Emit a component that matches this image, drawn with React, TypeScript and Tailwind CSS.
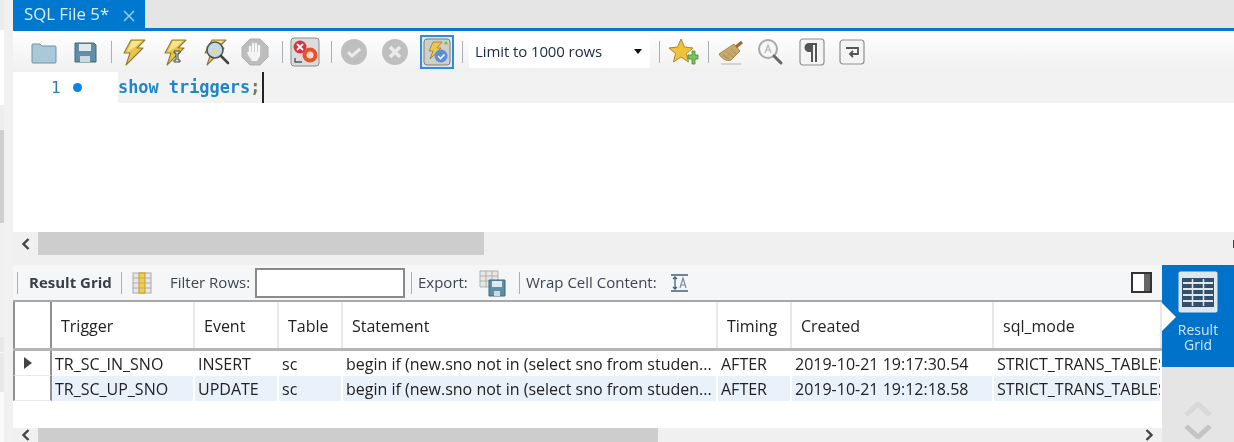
import React from 'react';

const uiFont = "font-['Open_Sans','Noto_Sans',sans-serif]";

const Sep = ({ ml, h = 'h-[22px]' }: { ml: number; h?: string }) => (
  <span className={`w-px ${h} bg-[#a9b0b5] shrink-0`} style={{ marginLeft: ml }} />
);

const Icon = ({ ml, children }: { ml: number; children: React.ReactNode }) => (
  <svg viewBox="0 0 32 32" className="w-8 h-8 shrink-0" style={{ marginLeft: ml }}>
    {children}
  </svg>
);

const Bolt = () => (
  <>
    <path d="M13 4h14l-8 8h6L8 29l4-12H6z" fill="#e8c649" stroke="#8f7a3c" strokeWidth="1.1" strokeLinejoin="round" />
    <path d="M14 5h10l-7 6-8 5z" fill="#f7e48c" />
  </>
);

const Toolbar = () => (
  <div className="h-[41px] flex items-center bg-gradient-to-b from-white to-[#f0f0f0] shrink-0">
    <Icon ml={15}>
      <path d="M4 9a1 1 0 011-1h7l2 2h13a1 1 0 011 1v15a1 1 0 01-1 1H5a1 1 0 01-1-1z" fill="#a9c8d8" stroke="#6f93a8" />
    </Icon>
    <Icon ml={9}>
      <path d="M6 7h19l2 2v17H6z" fill="#5f8fa8" stroke="#41677d" />
      <rect x="10" y="8" width="12" height="7" fill="#dfe9ee" />
      <rect x="11" y="20" width="10" height="6" fill="#cfd8dc" />
    </Icon>
    <Sep ml={10} />
    <Icon ml={6}>
      <Bolt />
    </Icon>
    <Icon ml={9}>
      <Bolt />
      <path d="M15 15h6v2h-2v7h2v2h-6v-2h2v-7h-2z" fill="#e4e4dc" stroke="#444" strokeWidth="1" />
    </Icon>
    <Icon ml={8}>
      <Bolt />
      <circle cx="16" cy="14" r="8" fill="#c4d8e8" stroke="#555" strokeWidth="1.6" />
      <path d="M13 17l3-5 3 5z" fill="#e8d98a" />
      <path d="M22 20l7 7" stroke="#444" strokeWidth="2.600" strokeLinecap="round" />
    </Icon>
    <Icon ml={8}>
      <path d="M11 3h10l8 8v10l-8 8H11l-8-8V11z" fill="#bdbdbd" stroke="#b0b0b0" />
      <path d="M11 18v-7M14 17V8M17 17V8M20 17v-7" stroke="#f4f4f4" strokeWidth="2.400" strokeLinecap="round" />
      <path d="M10 16h11v4l-3 5h-5l-4-6-1-3 2 0z" fill="#f4f4f4" />
    </Icon>
    <Sep ml={11} />
    <Icon ml={6}>
      <rect x="2" y="2" width="28" height="28" rx="3" fill="#dcdcdc" stroke="#8a8a8a" />
      <circle cx="11" cy="11" r="6.5" fill="#d8333d" />
      <path d="M8 8l6 6m0-6l-6 6" stroke="#fff" strokeWidth="1.8" />
      <circle cx="21" cy="19" r="7.5" fill="#e6532a" />
      <circle cx="21" cy="19" r="3.500" fill="#fbd9cc" />
      <path d="M6 22v4h7" stroke="#555" strokeWidth="1.4" fill="none" />
    </Icon>
    <Sep ml={10} />
    <Icon ml={6}>
      <circle cx="16" cy="16" r="13" fill="#bfbfbf" />
      <path d="M10 16l4 4 8-7" stroke="#ececec" strokeWidth="3" fill="none" />
    </Icon>
    <Icon ml={9}>
      <circle cx="16" cy="16" r="13" fill="#bfbfbf" />
      <path d="M11 11l10 10m0-10L11 21" stroke="#ececec" strokeWidth="3.2" />
    </Icon>
    <div className="ml-[9px] w-[34px] h-[34px] border-2 border-[#2b8fdc] bg-[#e6e6e6] flex items-center justify-center shrink-0">
      <svg viewBox="0 0 28 28" className="w-7 h-7">
        <rect x="1" y="1" width="26" height="26" rx="3" fill="#cfcfc9" stroke="#7d7d7d" />
        <path d="M10 4h9l-5 6h4L7 21l3-8H6z" fill="#e8c84e" stroke="#8f7a3c" strokeWidth="0.8" />
        <circle cx="23" cy="5" r="1.6" fill="#61c455" />
        <circle cx="18" cy="18" r="6.5" fill="#5b8ed8" />
        <path d="M15 18l2.500 2.500 4-4" stroke="#fff" strokeWidth="1.6" fill="none" />
      </svg>
    </div>
    <Sep ml={8} />
    <div className={`ml-[6px] w-[181px] h-8 bg-white flex items-center justify-between pl-[6px] pr-[8px] shrink-0 text-[15px] text-[#1a2a44] tracking-[-0.1px] ${uiFont}`}>
      <span>Limit to 1000 rows</span>
      <svg viewBox="0 0 8 5" className="w-2 h-[5px]">
        <path d="M0 0h8L4 5z" fill="#111" />
      </svg>
    </div>
    <Sep ml={9} />
    <Icon ml={7}>
      <path d="M14 3l3.500 8 8.500 1-6.500 5.500 2 8.500L14 21l-7.500 5 2-8.500L2 12l8.500-1z" fill="#f0c23c" stroke="#a88a2c" />
      <path d="M21 19h4v-4h3v4h3v4h-3v5h-3v-5h-4z" fill="#79c25a" stroke="#4a8a35" strokeWidth="0.8" />
    </Icon>
    <Sep ml={9} />
    <Icon ml={6}>
      <path d="M4 18l15-10 6 7-9 9c-4 2-10-2-12-6z" fill="#c9a86a" stroke="#a08a5a" />
      <path d="M8 19l6 4M12 16l6 5M16 13l5 5" stroke="#a08a5a" strokeWidth="0.8" />
      <path d="M21 11l6-5" stroke="#a0672c" strokeWidth="3" />
      <path d="M6 28h20" stroke="#c9c9c9" strokeWidth="1.500" />
    </Icon>
    <Icon ml={7}>
      <circle cx="14" cy="13" r="9" fill="#f6f6f6" stroke="#a8a8a8" strokeWidth="2" />
      <path d="M20 20l7 7" stroke="#666" strokeWidth="3" strokeLinecap="round" />
      <path d="M11 17l3-8 3 8m-5-3h4" stroke="#b4b4b4" strokeWidth="1.200" fill="none" />
    </Icon>
    <Icon ml={10}>
      <rect x="4" y="3" width="24" height="26" rx="3" fill="#f4f4f4" stroke="#909090" strokeWidth="1.2" />
      <path d="M20 7h-7a4.500 4.500 0 000 9h2v10h2V9h2v17h2V7z" fill="#555" />
    </Icon>
    <Icon ml={8}>
      <rect x="4" y="4" width="24" height="24" rx="3" fill="#f4f4f4" stroke="#909090" strokeWidth="1.2" />
      <path d="M10 12h12v6h-8m3-3l-3 3 3 3" stroke="#555" strokeWidth="1.800" fill="none" />
    </Icon>
  </div>
);

const ScrollBar = ({ thumb, right }: { thumb: string; right?: React.ReactNode }) => (
  <div className="flex items-center bg-[#f0f0f0] h-full">
    <svg viewBox="0 0 10 12" className="w-[25px] h-3 shrink-0">
      <path d="M8 1L3 6l5 5" stroke="#444" strokeWidth="2.400" fill="none" />
    </svg>
    <div className={`${thumb} h-full bg-[#cdcdcd] shrink-0`} />
    <div className="flex-1" />
    {right}
  </div>
);

const ResultToolbar = () => (
  <div className={`h-[35px] flex items-center bg-[#f5f6f8] text-[15px] text-[#3b4652] ${uiFont} shrink-0`}>
    <Sep ml={4} h="h-[22px]" />
    <span className="ml-[11px] w-[82px] font-bold text-[#3a3f45] whitespace-nowrap">Result Grid</span>
    <Sep ml={10} />
    <svg viewBox="0 0 20 22" className="ml-[10px] w-5 h-[22px] shrink-0">
      <rect x="1" y="1" width="18" height="20" fill="#e8e8e8" stroke="#aaa" />
      <rect x="7" y="1" width="6" height="20" fill="#f5d13c" stroke="#c79a1a" />
      <path d="M1 6h18M1 11h18M1 16h18" stroke="#aaa" />
    </svg>
    <span className="ml-[18px] whitespace-nowrap w-[78px]">Filter Rows:</span>
    <div className="ml-[7px] w-[150px] h-[30px] bg-white border-2 border-[#8a8a8a] shrink-0" />
    <Sep ml={6} />
    <span className="ml-[6px] whitespace-nowrap w-[50px]">Export:</span>
    <svg viewBox="0 0 28 28" className="ml-[11px] w-7 h-7 shrink-0">
      <path d="M1 2h18v16H1zM1 7h18M1 12h18M7 2v16M13 2v16" fill="#e6e6e6" stroke="#b0b0b0" />
      <path d="M10 11h16v16H10z" fill="#5f8fa8" stroke="#41677d" />
      <rect x="13" y="12" width="10" height="6" fill="#dfe9ee" />
      <rect x="15" y="22" width="6" height="5" fill="#cfd8dc" />
    </svg>
    <Sep ml={12} />
    <span className="ml-[6px] whitespace-nowrap w-[130px]">Wrap Cell Content:</span>
    <svg viewBox="0 0 18 18" className="ml-[15px] w-[18px] h-[18px] shrink-0">
      <path d="M0 1h17M0 17h17M4 3v12M2 5l2-2 2 2M2 13l2 2 2-2" stroke="#41627c" strokeWidth="1.300" fill="none" />
      <path d="M9 14l3-10 3 10m-5-3h4" stroke="#7a8c9a" strokeWidth="1.200" fill="none" />
    </svg>
    <div className="flex-1" />
    <div className="w-[21px] h-[21px] border-2 border-[#333] flex mr-[10px] shrink-0">
      <div className="w-[11px] bg-white" />
      <div className="flex-1 bg-[#666]" />
    </div>
  </div>
);

const headers = ['Trigger', 'Event', 'Table', 'Statement', 'Timing', 'Created', 'sql_mode'];
const widths = ['w-[143px]', 'w-[84px]', 'w-[64px]', 'w-[375px]', 'w-[74px]', 'w-[202px]', 'w-[168px]'];
const stmt = 'begin if (new.sno not in (select sno from studen...';
const rows = [
  ['TR_SC_IN_SNO', 'INSERT', 'sc', stmt, 'AFTER', '2019-10-21 19:17:30.54', 'STRICT_TRANS_TABLES'],
  ['TR_SC_UP_SNO', 'UPDATE', 'sc', stmt, 'AFTER', '2019-10-21 19:12:18.58', 'STRICT_TRANS_TABLES'],
];

const Grid = () => (
  <div className={`flex-1 bg-white border-t-2 border-[#a8a8a8] overflow-hidden text-[#222] text-[16px] ${uiFont}`}>
    <div className="flex h-[49px] border-b-[3px] border-[#b4b4b4]">
      <div className="w-[39px] border-l-2 border-r-2 border-l-[#909090] border-r-[#909090] shrink-0" />
      {headers.map((h, i) => (
        <div key={h} className={`${widths[i]} shrink-0 border-r-2 border-[#e8e8e8] pl-[9px] pt-[2px] flex items-center whitespace-nowrap`}>
          {h}
        </div>
      ))}
    </div>
    {rows.map((r, ri) => (
      <div key={r[0]} className="flex h-[25px]">
        <div className="w-[39px] border-l-2 border-r-2 border-l-[#909090] border-r-[#909090] border-b border-b-[#e8e8e8] shrink-0 flex items-center pl-[9px]">
          {ri === 0 && (
            <svg viewBox="0 0 8 12" className="w-2 h-3">
              <path d="M0 0l8 6-8 6z" fill="#444" />
            </svg>
          )}
        </div>
        {r.map((c, i) => (
          <div
            key={i}
            className={`${widths[i]} shrink-0 border-r-2 border-white pl-[3px] pt-px flex items-center whitespace-nowrap overflow-hidden ${ri === 1 ? 'bg-[#e9f1fb]' : ''}`}
          >
            {c}
          </div>
        ))}
      </div>
    ))}
  </div>
);

const SideBar = () => (
  <div className="relative w-[72px] shrink-0 bg-[#e5e5e5] flex flex-col">
    <div className="h-[102px] bg-[#0072c9] flex flex-col items-center pt-[6px]">
      <svg viewBox="0 0 40 42" className="w-10 h-[42px]">
        <rect x="0.5" y="0.5" width="39" height="41" rx="2" fill="#dfe7ee" />
        <rect x="4" y="7" width="32" height="29" fill="#33506b" />
        <path d="M5 12h30M5 18h30M5 24h30M5 30h30" stroke="#dfe7ee" strokeWidth="2" />
        <path d="M14.500 8v27M25.500 8v27" stroke="#dfe7ee" strokeWidth="1.500" />
      </svg>
      <div className={`mt-[9px] text-[14px] text-[#cfe6f8] text-center ${uiFont}`}>
        <div className="h-[15px] leading-[15px]">Result</div>
        <div className="h-[15px] leading-[15px]">Grid</div>
      </div>
    </div>
    {/* notch pointing into the blue tab */}
    <svg viewBox="0 0 14 28" className="absolute left-0 top-[38px] w-[14px] h-[28px]">
      <path d="M0 0l14 14L0 28z" fill="#fff" />
    </svg>
    <div className="flex-1 flex flex-col items-center pt-[35px] gap-[9px]">
      <svg viewBox="0 0 28 14" className="w-7 h-[14px]">
        <path d="M2 13L14 2l12 11" stroke="#d8d8d8" strokeWidth="5" fill="none" />
      </svg>
      <svg viewBox="0 0 28 14" className="w-7 h-[14px]">
        <path d="M2 1l12 11L26 1" stroke="#c4c4c4" strokeWidth="5" fill="none" />
      </svg>
    </div>
  </div>
);

const App: React.FC = () => (
  <div className="w-[1234px] h-[442px] overflow-hidden flex bg-white blur-[0.5px]">
    <div className="w-[13px] shrink-0 bg-[#f1f1f1] flex">
      <div className="w-[4px] flex flex-col">
        <div className="h-[30px] bg-[#ececec]" />
        <div className="h-[75px] bg-white" />
        <div className="h-[25px] bg-[#eeeeee]" />
        <div className="h-[93px] bg-[#cfcfcf]" />
        <div className="h-[114px] bg-[#f0f0f0]" />
        <div className="h-[15px] bg-[#e8e8e8]" />
        <div className="h-px bg-[#f4f4f4]" />
        <div className="h-[39px] bg-[#e8e8e8]" />
        <div className="flex-1 bg-[#fafafa]" />
      </div>
    </div>
    <div className="flex-1 flex flex-col min-w-0">
      <div className="h-[28px] bg-[#e5e5e5] flex shrink-0">
        <div className={`w-[132px] bg-[#0078d0] text-[#d9ecfa] flex items-center pl-[11px] text-[16.8px] ${uiFont}`}>
          <span>SQL File 5*</span>
          <svg viewBox="0 0 12 12" className="ml-[14px] w-3 h-3 mt-[3px]">
            <path d="M1 1l10 10M11 1L1 11" stroke="#a8cfee" strokeWidth="1.400" />
          </svg>
        </div>
      </div>
      <div className="h-[3px] bg-[#0078d0] shrink-0" />
      <Toolbar />
      <div className="h-[160px] bg-white font-['DejaVu_Sans_Mono',monospace] shrink-0">
        <div className="h-[31px] flex">
          <div className="w-[105px] bg-white flex items-center shrink-0">
            <span className="ml-[38px] text-[16px] text-[#2f7ea8]">1</span>
            <span className="ml-[12px] w-[9px] h-[9px] rounded-full bg-[#0a84e0]" />
          </div>
          <div className="flex-1 bg-[#f2f2f2] flex items-center text-[16.9px] font-bold text-[#1f86c6]">
            <span className="whitespace-pre">show triggers</span>
            <span className="text-[#6f7a52]">;</span>
            <span className="ml-[2px] w-[2px] h-[31px] bg-[#222]" />
          </div>
        </div>
      </div>
      <div className="h-[23px] shrink-0">
        <ScrollBar thumb="w-[446px]" right={<span className="w-px h-2 bg-[#444]" />} />
      </div>
      <div className="h-[10px] bg-[#f0f0f0] shrink-0" />
      <div className="flex-1 flex min-h-0">
        <div className="flex-1 flex flex-col min-w-0">
          <ResultToolbar />
          <Grid />
          <div className="h-[14px] shrink-0">
            <ScrollBar
              thumb="w-[620px]"
              right={
                <svg viewBox="0 0 10 12" className="w-[25px] h-3 shrink-0">
                  <path d="M2 1l5 5-5 5" stroke="#444" strokeWidth="2.400" fill="none" />
                </svg>
              }
            />
          </div>
        </div>
        <SideBar />
      </div>
    </div>
  </div>
);

export default App;
